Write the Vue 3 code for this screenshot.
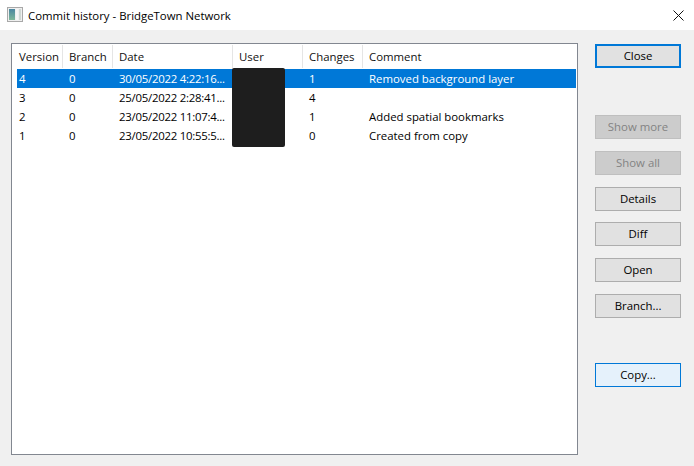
<script setup>
const columns = [
  { label: 'Version', w: 46 },
  { label: 'Branch', w: 50 },
  { label: 'Date', w: 120 },
  { label: 'User', w: 70 },
  { label: 'Changes', w: 60 },
  { label: 'Comment', w: 213 }
]
const rows = [
  { v: '4', b: '0', d: '30/05/2022 4:22:16...', c: '1', m: 'Removed background layer', sel: true },
  { v: '3', b: '0', d: '25/05/2022 2:28:41...', c: '4', m: '' },
  { v: '2', b: '0', d: '23/05/2022 11:07:4...', c: '1', m: 'Added spatial bookmarks' },
  { v: '1', b: '0', d: '23/05/2022 10:55:5...', c: '0', m: 'Created from copy' }
]
const buttons = [
  { t: 'Close', cls: 'focus' },
  { t: 'Show more', cls: 'disabled', gap: 47 },
  { t: 'Show all', cls: 'disabled', gap: 12 },
  { t: 'Details', cls: '', gap: 12 },
  { t: 'Diff', cls: '', gap: 11 },
  { t: 'Open', cls: '', gap: 12 },
  { t: 'Branch...', cls: '', gap: 12 },
  { t: 'Copy...', cls: 'hover', gap: 45 }
]
</script>

<template>
  <div class="window">
    <header class="titlebar">
      <svg class="appicon" width="16" height="16" viewBox="0 0 16 16">
        <defs>
          <linearGradient id="icon-fill" x1="0" y1="0" x2="0" y2="1">
            <stop offset="0" stop-color="#4a86a0" />
            <stop offset="1" stop-color="#7fb89a" />
          </linearGradient>
        </defs>
        <rect x="0.5" y="0.5" width="15" height="14" fill="#efefef" stroke="#a8a8a8" />
        <rect x="2" y="2" width="6" height="11" fill="url(#icon-fill)" />
        <rect x="9" y="2" width="2" height="11" fill="#f6f6f6" />
        <rect x="12" y="2" width="2" height="11" fill="#cfd8d4" />
      </svg>
      <span class="title">Commit history - BridgeTown Network</span>
      <svg class="closex" width="11" height="11" viewBox="0 0 11 11">
        <path d="M0.5 0.5 L10.5 10.5 M10.5 0.5 L0.5 10.5" stroke="#111" stroke-width="1" fill="none" />
      </svg>
    </header>
    <main class="body">
      <section class="list">
        <div class="head">
          <div v-for="c in columns" :key="c.label" class="hcell" :style="{ width: c.w + 'px' }">{{ c.label }}</div>
        </div>
        <div v-for="r in rows" :key="r.v" class="row" :class="{ sel: r.sel }">
          <div class="cell" style="width: 50px">{{ r.v }}</div>
          <div class="cell" style="width: 50px">{{ r.b }}</div>
          <div class="cell date" style="width: 120px">{{ r.d }}</div>
          <div class="cell" style="width: 70px"></div>
          <div class="cell" style="width: 60px">{{ r.c }}</div>
          <div class="cell" style="width: 209px">{{ r.m }}</div>
        </div>
        <div class="redact"></div>
      </section>
      <aside class="side">
        <button
          v-for="b in buttons"
          :key="b.t"
          class="btn"
          :class="b.cls"
          :style="{ marginTop: (b.gap || 0) + 'px' }"
        >{{ b.t }}</button>
      </aside>
    </main>
  </div>
</template>

<style>
html, body { margin: 0; background: #f0f0f0; }
</style>

<style scoped>
.window {
  width: 694px;
  height: 466px;
  display: flex;
  flex-direction: column;
  font-family: "Open Sans", "Noto Sans", sans-serif;
  font-size: 11.4px;
  color: #000;
  overflow: hidden;
}
.titlebar {
  height: 30px;
  background: #fff;
  display: flex;
  align-items: center;
  padding: 0 10px 0 7px;
  box-sizing: border-box;
}
.appicon { margin-right: 5px; }
.title { flex: 1; }
.body {
  flex: 1;
  display: flex;
  background: #f0f0f0;
  padding: 13px 13px 11px 11px;
  gap: 17px;
}
.list {
  position: relative;
  width: 567px;
  height: 412px;
  box-sizing: border-box;
  background: #fff;
  border: 1px solid #828790;
  padding: 1px 1px 0 5px;
}
.head { display: flex; height: 24px; }
.hcell {
  box-sizing: border-box;
  padding: 2px 0 0 6px;
  height: 23px;
  border-right: 1px solid #e5e5e5;
  line-height: 19px;
  color: #111;
}
.hcell:first-child { padding-left: 2px; }
.hcell:last-child { border-right: none; }
.row { display: flex; height: 19px; line-height: 19px; }
.row.sel { background: #0078d7; color: #fff; }
.cell {
  box-sizing: border-box;
  padding-left: 2px;
  white-space: nowrap;
  overflow: hidden;
}
.date { letter-spacing: -0.25px; }
.redact {
  position: absolute;
  left: 220px;
  top: 24px;
  width: 53px;
  height: 79px;
  background: #1e1e1e;
  border-radius: 2px;
  filter: blur(0.7px);
}
.side {
  display: flex;
  flex-direction: column;
  width: 86px;
  padding-top: 1px;
}
.btn {
  width: 86px;
  height: 24px;
  box-sizing: border-box;
  background: #e1e1e1;
  border: 1px solid #adadad;
  font: inherit;
  color: #000;
  padding: 0 0 1px;
  flex: none;
}
.btn.focus { border: 2px solid #0078d7; }
.btn.disabled { background: #cccccc; border-color: #bfbfbf; color: #838383; }
.btn.hover { background: #e5f1fb; border-color: #0078d7; }
</style>
